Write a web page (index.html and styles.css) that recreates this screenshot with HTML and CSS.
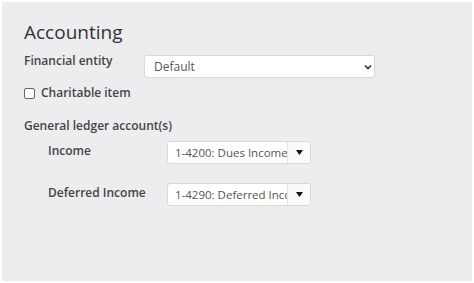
FILE: index.html
```html
<!DOCTYPE html>
<html>
<head>
<meta charset="utf-8">
<link rel="stylesheet" href="styles.css">
</head>
<body>
<div class="panel">
  <h2 class="title">Accounting</h2>
  <div class="row entity-row">
    <span class="label">Financial entity</span>
    <div class="select wide">
      <span class="value">Default</span>
      <svg class="chev" width="8" height="6" viewBox="0 0 8 6"><path d="M1 1.5 L4 4.5 L7 1.5" fill="none" stroke="#333" stroke-width="1.6"/></svg>
    </div>
  </div>
  <label class="check-row">
    <span class="box"></span>
    <span class="label">Charitable item</span>
  </label>
  <div class="label section">General ledger account(s)</div>
  <div class="row sub-row">
    <span class="label sub-label">Income</span>
    <div class="select combo">
      <span class="value">1-4200: Dues Income</span>
      <span class="btn"><svg width="7" height="5" viewBox="0 0 7 5"><path d="M0 0 H7 L3.5 5 Z" fill="#111"/></svg></span>
    </div>
  </div>
  <div class="row sub-row">
    <span class="label sub-label">Deferred Income</span>
    <div class="select combo">
      <span class="value">1-4290: Deferred Income</span>
      <span class="btn"><svg width="7" height="5" viewBox="0 0 7 5"><path d="M0 0 H7 L3.5 5 Z" fill="#111"/></svg></span>
    </div>
  </div>
</div>
</body>
</html>
```
FILE: styles.css
```css
html, body {
  margin: 0;
  padding: 0;
  background: #ffffff;
}
body {
  padding: 2px 2px 2px 2px;
  font-family: "Open Sans", "Liberation Sans", sans-serif;
}
.panel {
  background: #ededef;
  height: 279px;
  box-sizing: border-box;
  padding: 17px 22px 0 22px;
}
.title {
  margin: 0;
  font-size: 19px;
  font-weight: 400;
  color: #333;
  line-height: 26px;
}
.label {
  font-size: 12px;
  font-weight: 600;
  color: #444;
  line-height: 16px;
}
.row {
  display: flex;
  align-items: flex-start;
}
.entity-row {
  margin-top: 8px;
}
.entity-row .label {
  width: 120px;
}
.select {
  background: #fff;
  border: 1px solid #d9d9dc;
  border-radius: 3px;
  height: 23px;
  box-sizing: border-box;
  display: flex;
  align-items: center;
  font-size: 12px;
  color: #555;
}
.wide {
  width: 231px;
  margin-top: 2px;
  padding: 0 2px 0 9px;
  justify-content: space-between;
}
.value {
  white-space: nowrap;
  overflow: hidden;
}
.check-row {
  display: flex;
  align-items: center;
  margin-top: 7px;
}
.box {
  width: 9px;
  height: 9px;
  border: 1px solid #666;
  border-radius: 2px;
  background: #fff;
  margin-right: 6px;
}
.section {
  margin-top: 17px;
}
.sub-row {
  margin-top: 9px;
  padding-left: 24px;
}
.sub-row + .sub-row {
  margin-top: 21px;
}
.sub-label {
  width: 119px;
}
.combo {
  width: 144px;
  margin-top: -2px;
  padding-left: 7px;
  font-size: 11.5px;
}
.combo .value {
  flex: 1;
  min-width: 0;
  text-overflow: clip;
}
.btn {
  width: 22px;
  height: 21px;
  border-left: 1px solid #e4e4e4;
  background: #fafafa;
  display: flex;
  align-items: center;
  justify-content: center;
  border-radius: 0 3px 3px 0;
  flex: none;
}
```
